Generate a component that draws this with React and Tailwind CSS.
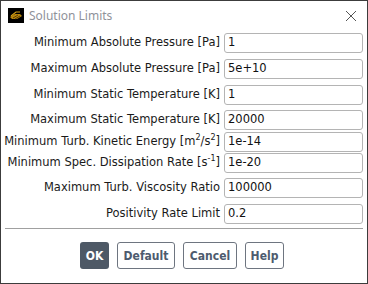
import React from "react";

const Sup = ({ children }) => (
  <sup className="text-[8px] relative -top-[5px]">{children}</sup>
);

const rows = [
  { label: "Minimum Absolute Pressure [Pa]", value: "1", mt: "mt-[3px]" },
  { label: "Maximum Absolute Pressure [Pa]", value: "5e+10", mt: "mt-[6px]" },
  { label: "Minimum Static Temperature [K]", value: "1", mt: "mt-[6px]" },
  { label: "Maximum Static Temperature [K]", value: "20000", mt: "mt-[5px]" },
  { label: <>Minimum Turb. Kinetic Energy [m<Sup>2</Sup>/s<Sup>2</Sup>]</>, value: "1e-14", mt: "mt-[2px]" },
  { label: <>Minimum Spec. Dissipation Rate [s<Sup>-1</Sup>]</>, value: "1e-20", mt: "mt-[1px]" },
  { label: "Maximum Turb. Viscosity Ratio", value: "100000", mt: "mt-[5px]" },
  { label: "Positivity Rate Limit", value: "0.2", mt: "mt-[6px]" },
];

export default function App() {
  return (
    <div
      className="w-[368px] h-[284px] bg-white border border-[#3c3c3c] flex flex-col overflow-hidden"
      style={{ fontFamily: '"DejaVu Sans", Verdana, sans-serif' }}
    >
      <div className="h-[29px] flex items-center pl-[7px] pr-[10px] shrink-0">
        <svg width="16" height="15" viewBox="0 0 16 15" className="shrink-0">
          <rect width="16" height="15" fill="#000" />
          <path d="M2 9 L7 6 L12 6 L14 8 L9 11 L4 11 Z" fill="#b8860b" />
          <path d="M3 8 L8 4 L12 4" stroke="#d4a017" strokeWidth="1.2" fill="none" />
          <path d="M5 10 L10 7" stroke="#5a3e05" strokeWidth="1" />
          <path d="M7 11 L12 8" stroke="#5a3e05" strokeWidth="1" />
        </svg>
        <span
          className="ml-[5px] text-[12px] text-[#8f929a]"
          style={{ fontFamily: '"Noto Sans", "Open Sans", sans-serif' }}
        >
          Solution Limits
        </span>
        <div className="ml-auto">
          <svg width="12" height="12" viewBox="0 0 12 12">
            <path d="M1 1 L11 11 M11 1 L1 11" stroke="#555" strokeWidth="1" />
          </svg>
        </div>
      </div>
      <div className="flex flex-col pr-[4px]">
        {rows.map((r, i) => (
          <div key={i} className={`flex items-center justify-end ${r.mt}`}>
            <span className="text-[11.5px] text-[#1a1a1a] whitespace-nowrap mr-[4px] leading-none">
              {r.label}
            </span>
            <div className="w-[139px] h-[20px] border border-[#b4b4b4] rounded-[3px] flex items-center px-[3px] text-[11.5px] text-[#111] shrink-0">
              {r.value}
            </div>
          </div>
        ))}
      </div>
      <div className="mt-[4px] mx-[4px] h-px bg-[#a0a0a0]" />
      <div className="flex gap-[8px] mt-[13px] pl-[79px]">
        {[
          ["OK", "w-[29px]", true],
          ["Default", "w-[58px]", false],
          ["Cancel", "w-[54px]", false],
          ["Help", "w-[39px]", false],
        ].map(([t, w, primary]) => (
          <div
            key={t}
            className={`${w} h-[27px] rounded-[3px] flex items-center justify-center text-[12px] font-bold ${
              primary
                ? "bg-[#4e5966] text-white"
                : "border border-[#6e7580] text-[#4d5b6e] bg-white"
            }`}
            style={{ fontFamily: '"DejaVu Sans Condensed", "DejaVu Sans", sans-serif' }}
          >
            {t}
          </div>
        ))}
      </div>
    </div>
  );
}
